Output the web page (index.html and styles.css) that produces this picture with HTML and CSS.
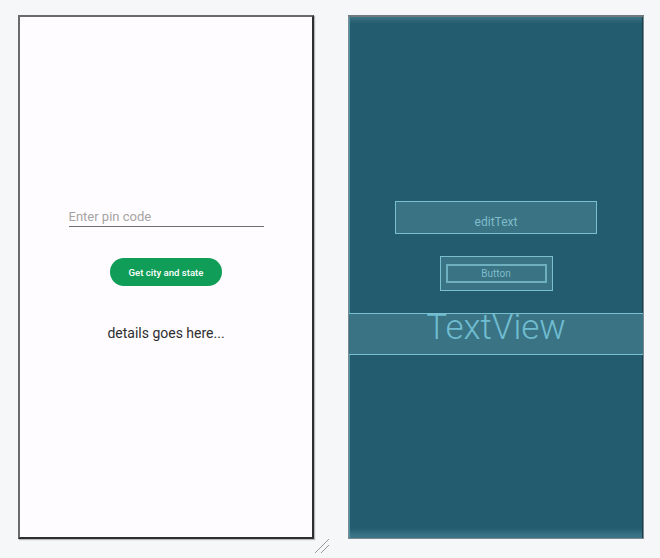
FILE: index.html
```html
<!DOCTYPE html>
<html>
<head>
<meta charset="utf-8">
<link rel="stylesheet" href="styles.css">
</head>
<body>
<div class="stage">
  <div class="frame design">
    <div class="edit">Enter pin code</div>
    <div class="btn">Get city and state</div>
    <div class="details">details goes here...</div>
  </div>
  <div class="frame blueprint">
    <div class="bp-edit">editText</div>
    <div class="bp-btn"><div class="bp-btn-inner">Button</div></div>
    <div class="bp-text">TextView</div>
  </div>
  <div class="grip">
    <svg width="16" height="16" viewBox="0 0 16 16"><path d="M1 15 L15 1 M7 15 L15 7" stroke="#9a9a9a" stroke-width="1" fill="none"/></svg>
  </div>
</div>
</body>
</html>
```
FILE: styles.css
```css
html, body {
  margin: 0;
  padding: 0;
  background: #f5f7f8;
  font-family: Roboto, "Liberation Sans", sans-serif;
}
.stage {
  position: relative;
  width: 660px;
  height: 558px;
  display: flex;
  gap: 34px;
  padding: 15px 0 0 18px;
  box-sizing: border-box;
}
.frame {
  width: 296px;
  height: 524px;
  box-sizing: border-box;
  display: flex;
  flex-direction: column;
  align-items: center;
}
.design {
  background: #fffcff;
  border: 2px solid #2e2e2e;
  border-top-color: #6a6a6a;
  border-left-color: #6a6a6a;
  box-shadow: 1px 1px 1px rgba(0,0,0,0.25);
  padding-top: 191px;
}
.edit {
  width: 195px;
  height: 19px;
  box-sizing: border-box;
  border-bottom: 1px solid #6e6e6e;
  color: #a4a4a4;
  font-size: 13px;
  line-height: 17px;
}
.btn {
  margin-top: 31px;
  width: 112px;
  height: 28px;
  border-radius: 14px;
  background: #0f9d58;
  color: #ffffff;
  font-size: 9.6px;
  font-weight: 500;
  display: flex;
  align-items: center;
  justify-content: center;
}
.details {
  margin-top: 39px;
  font-size: 14px;
  color: #2e2e2e;
}
.blueprint {
  background: linear-gradient(to bottom, #3b7486 0, #2c6476 4px, #235c6e 7px, #235c6e calc(100% - 10px), #3b7486 calc(100% - 2px));
  border: 1px solid #7a8a90;
  border-top: 2px solid #6f7a7e;
  box-shadow: inset 1px 0 0 #4f94a6, inset -1px 0 0 #1a4050;
  padding-top: 184px;
}
.bp-edit {
  width: 202px;
  height: 33px;
  box-sizing: border-box;
  border: 1px solid #78c0d0;
  background: #3a7383;
  color: #7fbccc;
  font-size: 12px;
  display: flex;
  align-items: center;
  justify-content: center;
  padding-top: 9px;
}
.bp-btn {
  margin-top: 22px;
  width: 113px;
  height: 35px;
  box-sizing: border-box;
  border: 1px solid #78c0d0;
  background: #3a7383;
  padding: 7px 5px 7px 5px;
  display: flex;
}
.bp-btn-inner {
  flex: 1;
  border: 2px solid #6fb0c0;
  color: #7fbccc;
  font-size: 10px;
  display: flex;
  align-items: center;
  justify-content: center;
}
.bp-text {
  margin-top: 22px;
  align-self: stretch;
  height: 42px;
  box-sizing: border-box;
  border-top: 1px solid #78c0d0;
  border-bottom: 1px solid #78c0d0;
  background: #3a7383;
  color: #6fbcd0;
  font-size: 35px;
  font-weight: 300;
  line-height: 28px;
  text-align: center;
}
.grip {
  position: absolute;
  left: 314px;
  top: 538px;
  width: 16px;
  height: 16px;
}
.grip svg { display: block; }
```
